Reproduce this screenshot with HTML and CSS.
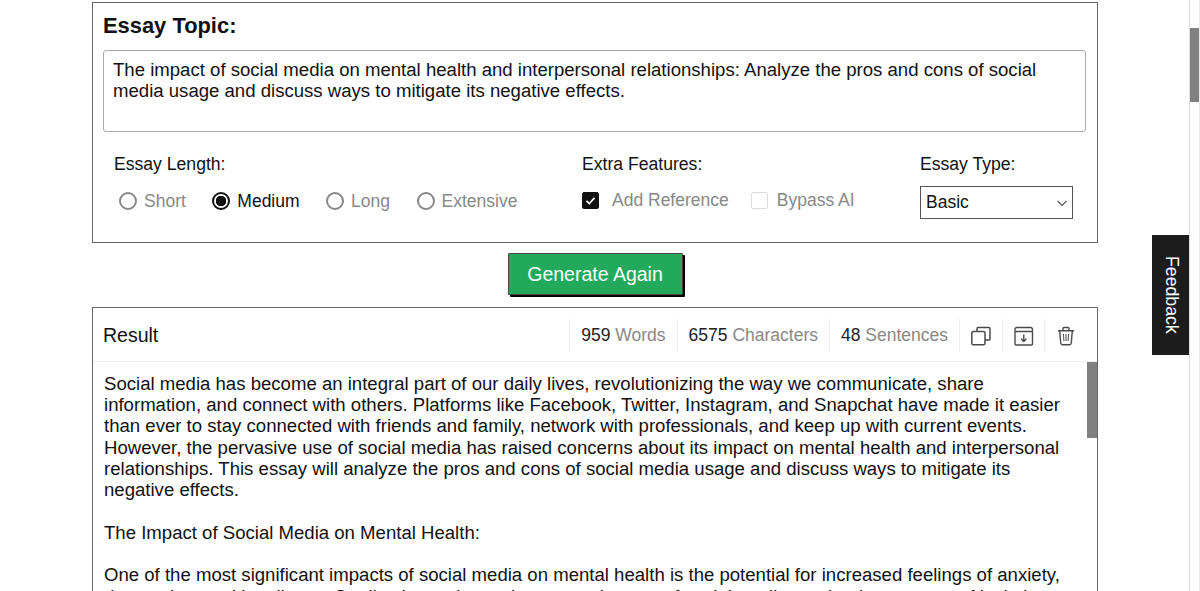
FILE: index.html
```html
<!DOCTYPE html>
<html lang="en">
<head>
  <meta charset="UTF-8">
  <title>Essay Writer</title>
  <link rel="stylesheet" href="styles.css">
</head>
<body>
  <div class="page">
    <div class="topic-box">
      <h2 class="topic-title">Essay Topic:</h2>
      <div class="topic-input">The impact of social media on mental health and interpersonal relationships: Analyze the pros and cons of social media usage and discuss ways to mitigate its negative effects.</div>
      <div class="options">
        <div class="opt-length">
          <div class="opt-label">Essay Length:</div>
          <div class="radio-group">
            <label class="radio"><span class="radio-dot"></span>Short</label>
            <label class="radio checked"><span class="radio-dot"></span>Medium</label>
            <label class="radio"><span class="radio-dot"></span>Long</label>
            <label class="radio"><span class="radio-dot"></span>Extensive</label>
          </div>
        </div>
        <div class="opt-extra">
          <div class="opt-label">Extra Features:</div>
          <div class="check-group">
            <label class="check checked">
              <span class="check-box">
                <svg width="13" height="13" viewBox="0 0 13 13"><path d="M2.500 6.800l2.800 2.700 5.200-5.600" fill="none" stroke="#fff" stroke-width="1.600"/></svg>
              </span>Add Reference
            </label>
            <label class="check"><span class="check-box"></span>Bypass AI</label>
          </div>
        </div>
        <div class="opt-type">
          <div class="opt-label">Essay Type:</div>
          <div class="select-box">
            <span>Basic</span>
            <svg width="12" height="8" viewBox="0 0 12 8"><path d="M1.500 2l4.500 4.500L10.500 2" fill="none" stroke="#555" stroke-width="1.100"/></svg>
          </div>
        </div>
      </div>
    </div>

    <div class="btn-row">
      <button class="generate-btn">Generate Again</button>
    </div>

    <div class="result-box">
      <div class="result-head">
        <div class="result-title">Result</div>
        <div class="stats">
          <div class="stat"><b>959</b> Words</div>
          <div class="stat"><b>6575</b> Characters</div>
          <div class="stat"><b>48</b> Sentences</div>
          <div class="tool">
            <svg width="20" height="20" viewBox="0 0 20 20" fill="none" stroke="#4a4a4a" stroke-width="1.500"><rect x="0.800" y="5.500" width="13.200" height="13.200" rx="1.500"/><path d="M6 5.500V2.500a1 1 0 0 1 1-1h11a1 1 0 0 1 1 1V13a1 1 0 0 1-1 1h-4"/></svg>
          </div>
          <div class="tool">
            <svg width="20" height="20" viewBox="0 0 20 20" fill="none" stroke="#4a4a4a" stroke-width="1.400"><path d="M1 5.500V3.500a2 2 0 0 1 2-2h13.500a2 2 0 0 1 2 2v2"/><rect x="1" y="5.500" width="17.500" height="13.500" rx="1"/><path d="M9.800 8.500v7M7.200 12.800l2.600 2.700 2.600-2.700"/></svg>
          </div>
          <div class="tool">
            <svg width="18" height="20" viewBox="0 0 18 20" fill="none" stroke="#4a4a4a" stroke-width="1.400"><path d="M1 4.800h16M6 4.500V2.500a1 1 0 0 1 1-1h4a1 1 0 0 1 1 1v2M2.700 4.800l1 12.200a2 2 0 0 0 2 1.700h6.600a2 2 0 0 0 2-1.700l1-12.200"/><path d="M6.500 8l.4 7M9 8v7M11.500 8l-.4 7" stroke-width="1"/></svg>
          </div>
        </div>
      </div>
      <div class="result-body">
        <div class="essay">
          <p>Social media has become an integral part of our daily lives, revolutionizing the way we communicate, share information, and connect with others. Platforms like Facebook, Twitter, Instagram, and Snapchat have made it easier than ever to stay connected with friends and family, network with professionals, and keep up with current events. However, the pervasive use of social media has raised concerns about its impact on mental health and interpersonal relationships. This essay will analyze the pros and cons of social media usage and discuss ways to mitigate its negative effects.</p>
          <p>The Impact of Social Media on Mental Health:</p>
          <p>One of the most significant impacts of social media on mental health is the potential for increased feelings of anxiety, depression, and loneliness. Studies have shown that excessive use of social media can lead to a sense of isolation.</p>
        </div>
        <div class="inner-scroll"><div class="inner-thumb"></div></div>
      </div>
    </div>
  </div>

  <div class="feedback-tab"><span>Feedback</span></div>
  <div class="page-scroll"><div class="page-thumb"></div></div>
</body>
</html>
```

FILE: styles.css
```css
html, body {
  height: 100%;
}
body {
  margin: 0;
  overflow: hidden;
  background: #fff;
  font-family: "Liberation Sans", Arial, sans-serif;
  color: #111;
  position: relative;
}
.page {
  width: 1006px;
  margin-left: 92px;
  padding-top: 2px;
}
.topic-box {
  height: 241px;
  box-sizing: border-box;
  border: 1px solid #666;
  padding: 0 10px;
}
.topic-title {
  margin: 0;
  padding-top: 10px;
  font-size: 21.900px;
  line-height: 26px;
  font-weight: bold;
  color: #111;
}
.topic-input {
  margin-top: 11px;
  width: 983px;
  height: 82px;
  box-sizing: border-box;
  border: 1px solid #aaa;
  border-radius: 3px;
  padding: 8px 9px;
  font-size: 18.580px;
  line-height: 21px;
}
.options {
  display: flex;
  padding: 21px 0 0 11px;
}
.opt-label {
  font-size: 17.600px;
  line-height: 22px;
}
.opt-length {
  width: 468px;
}
.opt-extra {
  width: 338px;
}
.radio-group {
  display: flex;
  gap: 26.500px;
  margin-top: 15px;
  padding-left: 5px;
}
.radio {
  display: flex;
  align-items: center;
  gap: 7px;
  font-size: 17.500px;
  line-height: 22px;
  color: #888;
}
.radio-dot {
  width: 18px;
  height: 18px;
  box-sizing: border-box;
  border: 2px solid #888;
  border-radius: 50%;
  background: #fff;
}
.radio.checked {
  color: #111;
}
.radio.checked .radio-dot {
  border-color: #111;
  background: radial-gradient(circle, #111 0 5px, #fff 5.500px);
}
.check-group {
  display: flex;
  gap: 22px;
  margin-top: 14px;
}
.check {
  display: flex;
  align-items: center;
  gap: 9px;
  font-size: 17.500px;
  line-height: 22px;
  color: #888;
}
.check.checked {
  gap: 13px;
}
.check-box {
  width: 17px;
  height: 17px;
  box-sizing: border-box;
  border: 1px solid #ddd;
  border-radius: 2px;
  display: flex;
  align-items: center;
  justify-content: center;
}
.check.checked .check-box {
  background: #111;
  border-color: #111;
}
.select-box {
  margin-top: 11px;
  width: 153px;
  height: 33px;
  box-sizing: border-box;
  border: 1px solid #555;
  display: flex;
  align-items: center;
  justify-content: space-between;
  padding: 0 4px 0 5px;
  font-size: 17.500px;
}
.btn-row {
  display: flex;
  justify-content: center;
  padding: 10px 0 12px;
}
.generate-btn {
  width: 175px;
  height: 42px;
  box-sizing: border-box;
  background: #22a95c;
  color: #fff;
  border: 1px solid #444;
  border-radius: 1px;
  box-shadow: 2px 2px 0 #000;
  font-family: inherit;
  font-size: 19.500px;
}
.result-box {
  border: 1px solid #666;
  border-bottom: none;
  height: 300px;
}
.result-head {
  display: flex;
  align-items: center;
  justify-content: space-between;
  height: 51px;
  padding: 2px 11px 0 10px;
  border-bottom: 1px solid #eee;
}
.result-title {
  font-size: 19.500px;
}
.stats {
  display: flex;
  align-items: center;
  height: 33px;
  color: #888;
  font-size: 17.500px;
}
.stat {
  padding: 0 11px;
  line-height: 33px;
  border-left: 1px solid #eee;
}
.stat b {
  font-weight: normal;
  color: #222;
}
.tool {
  width: 41px;
  height: 33px;
  border-left: 1px solid #eee;
  display: flex;
  align-items: center;
  justify-content: center;
}
.tool:nth-child(4) {
  width: 42px;
}
.result-body {
  display: flex;
  justify-content: space-between;
}
.essay {
  padding: 11px 0 0 11px;
  width: 960px;
  font-size: 18.580px;
  line-height: 21.200px;
}
.essay p {
  margin: 0 0 21.500px;
}
.inner-scroll {
  width: 10px;
  height: 240px;
}
.inner-thumb {
  height: 76px;
  background: #808080;
}
.feedback-tab {
  position: absolute;
  left: 1152px;
  top: 235px;
  width: 37px;
  height: 120px;
  box-sizing: border-box;
  padding-left: 2px;
  background: #1c1c1c;
  color: #fff;
  display: flex;
  align-items: center;
  justify-content: center;
}
.feedback-tab span {
  writing-mode: vertical-rl;
  font-size: 17.700px;
}
.page-scroll {
  position: absolute;
  left: 1189px;
  top: 0;
  width: 11px;
  height: 591px;
  box-sizing: border-box;
  border-left: 1px solid #ddd;
  border-right: 1px solid #e8e8e8;
}
.page-thumb {
  margin-top: 28px;
  height: 74px;
  background: #808080;
}
```
